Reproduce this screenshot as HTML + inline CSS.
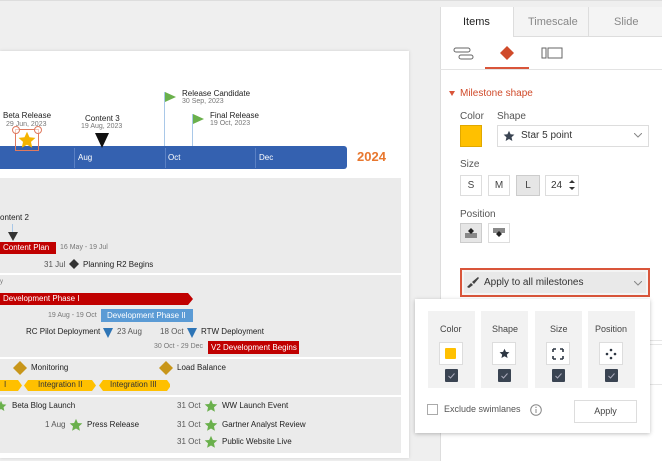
<!DOCTYPE html>
<html><head><style>
*{margin:0;padding:0;box-sizing:border-box}
body{width:662px;height:461px;background:#efefef;font-family:"Liberation Sans",sans-serif;position:relative;overflow:hidden;font-size:8px;color:#222}
.a{position:absolute;white-space:nowrap}
.g{color:#777}
.lane{position:absolute;left:0;width:401px;background:#ebebeb}
</style></head><body>
<div class="a" style="left:0;top:0;width:662px;height:1px;background:#ddd"></div>
<!-- canvas -->
<div class="a" style="left:0;top:51px;width:409px;height:407px;background:#fff;box-shadow:0 0 3px #ccc"></div>
<div class="a" style="left:0;top:146px;width:347px;height:23px;background:#3461b0;border-radius:0 3px 3px 0"></div>
<div class="a" style="left:74px;top:148px;width:1px;height:20px;background:#5a80c4"></div>
<div class="a" style="left:165px;top:148px;width:1px;height:20px;background:#5a80c4"></div>
<div class="a" style="left:255px;top:148px;width:1px;height:20px;background:#5a80c4"></div>
<div class="a" style="left:78px;top:153px;color:#fff;font-size:8px">Aug</div>
<div class="a" style="left:168px;top:153px;color:#fff;font-size:8px">Oct</div>
<div class="a" style="left:259px;top:153px;color:#fff;font-size:8px">Dec</div>
<div class="a" style="left:357px;top:149px;color:#e8772e;font-size:13px;font-weight:bold">2024</div>
<!-- milestones top -->
<div class="a" style="left:3px;top:111px;font-size:8px">Beta Release</div>
<div class="a g" style="left:6px;top:121px;font-size:7px">29 Jun, 2023</div>
<div class="a" style="left:15px;top:129px;width:24px;height:22px;border:1px solid #e07a5f"></div>
<svg class="a" style="left:11px;top:125px" width="32" height="12"><circle cx="5" cy="5" r="3.5" fill="#fff" fill-opacity=".6" stroke="#e07a5f"/><circle cx="27" cy="5" r="3.5" fill="#fff" fill-opacity=".6" stroke="#e07a5f"/></svg>
<svg class="a" style="left:17px;top:131px" width="20" height="18" viewBox="0 0 24 23"><path d="M12 1l3.2 7 7.6.8-5.7 5.1 1.6 7.5L12 17.6 5.3 21.4l1.6-7.5L1.2 8.8 8.8 8z" fill="#f4b400"/></svg>
<div class="a" style="left:85px;top:114px;font-size:8px">Content 3</div>
<div class="a g" style="left:81px;top:123px;font-size:7px">19 Aug, 2023</div>
<svg class="a" style="left:95px;top:133px" width="14" height="16"><path d="M0 0h14L7 15z" fill="#111"/></svg>
<div class="a" style="left:164px;top:92px;width:1px;height:54px;background:#a9c8e8"></div>
<svg class="a" style="left:165px;top:92px" width="12" height="12"><path d="M0 0l11 5L0 10z" fill="#6ab04c"/></svg>
<div class="a" style="left:182px;top:89px;font-size:8px">Release Candidate</div>
<div class="a g" style="left:182px;top:98px;font-size:7px">30 Sep, 2023</div>
<div class="a" style="left:192px;top:114px;width:1px;height:32px;background:#a9c8e8"></div>
<svg class="a" style="left:193px;top:114px" width="12" height="12"><path d="M0 0l11 5L0 10z" fill="#6ab04c"/></svg>
<div class="a" style="left:210px;top:111px;font-size:8px">Final Release</div>
<div class="a g" style="left:210px;top:120px;font-size:7px">19 Oct, 2023</div>
<!-- lanes -->
<div class="lane" style="top:178px;height:95px"></div>
<div class="lane" style="top:275px;height:82px"></div>
<div class="lane" style="top:359px;height:36px"></div>
<div class="lane" style="top:397px;height:56px"></div>
<div class="a" style="left:0;top:213px;font-size:8px">ontent 2</div>
<div class="a" style="left:12px;top:224px;width:1px;height:8px;background:#a9c8e8"></div>
<svg class="a" style="left:8px;top:232px" width="10" height="10"><path d="M0 0h10L5 9z" fill="#333"/></svg>
<div class="a" style="left:0;top:242px;width:56px;height:12px;background:#c00000;color:#fff;font-size:8px;padding:1px 3px">Content Plan</div>
<div class="a g" style="left:60px;top:244px;font-size:7px">16 May - 19 Jul</div>
<div class="a g" style="left:44px;top:260px;font-size:8px;color:#555">31 Jul</div>
<svg class="a" style="left:69px;top:259px" width="10" height="10"><path d="M5 0l5 5-5 5-5-5z" fill="#333"/></svg>
<div class="a" style="left:83px;top:260px;font-size:8px">Planning R2 Begins</div>
<div class="a g" style="left:0;top:279px;font-size:6px">y</div>
<svg class="a" style="left:0;top:293px" width="194" height="12"><path d="M0 0h188l5 6-5 6H0z" fill="#c00000"/></svg>
<div class="a" style="left:3px;top:294px;color:#fff;font-size:8px">Development Phase I</div>
<div class="a g" style="left:48px;top:312px;font-size:7px">19 Aug - 19 Oct</div>
<div class="a" style="left:101px;top:309px;width:92px;height:13px;background:#5b9bd5;color:#fff;font-size:8px;padding:2px 6px">Development Phase II</div>
<div class="a" style="left:26px;top:327px;font-size:8px">RC Pilot Deployment</div>
<svg class="a" style="left:103px;top:328px" width="10" height="10"><path d="M0 0h10L5 10z" fill="#2e75b6"/></svg>
<div class="a g" style="left:117px;top:327px;font-size:8px;color:#555">23 Aug</div>
<div class="a g" style="left:160px;top:327px;font-size:8px;color:#555">18 Oct</div>
<svg class="a" style="left:187px;top:328px" width="10" height="10"><path d="M0 0h10L5 10z" fill="#2e75b6"/></svg>
<div class="a" style="left:201px;top:327px;font-size:8px">RTW Deployment</div>
<div class="a g" style="left:154px;top:343px;font-size:7px">30 Oct - 29 Dec</div>
<div class="a" style="left:208px;top:341px;width:91px;height:13px;background:#c00000;color:#fff;font-size:8px;padding:2px 3px">V2 Development Begins</div>
<svg class="a" style="left:13px;top:361px" width="14" height="14"><path d="M7 0l7 7-7 7-7-7z" fill="#c8961a"/></svg>
<div class="a" style="left:31px;top:363px;font-size:8px">Monitoring</div>
<svg class="a" style="left:159px;top:361px" width="14" height="14"><path d="M7 0l7 7-7 7-7-7z" fill="#c8961a"/></svg>
<div class="a" style="left:177px;top:363px;font-size:8px">Load Balance</div>
<svg class="a" style="left:0;top:380px" width="170" height="11"><path d="M0 0h18l4 5.5-4 5.5H0z" fill="#ffc000"/><path d="M28 0h64l4 5.5-4 5.5H28l-4-5.5z" fill="#ffc000"/><path d="M103 0h64l4 5.5-4 5.5H103l-4-5.5z" fill="#ffc000"/></svg>
<div class="a" style="left:4px;top:380px;font-size:8px;color:#333">I</div>
<div class="a" style="left:38px;top:380px;font-size:8px;color:#333">Integration II</div>
<div class="a" style="left:110px;top:380px;font-size:8px;color:#333">Integration III</div>
<svg class="a" style="left:-5px;top:400px" width="12" height="12" viewBox="0 0 24 23"><path d="M12 1l3.2 7 7.6.8-5.7 5.1 1.6 7.5L12 17.6 5.3 21.4l1.6-7.5L1.2 8.8 8.8 8z" fill="#6ab04c"/></svg>
<div class="a" style="left:12px;top:401px;font-size:8px">Beta Blog Launch</div>
<div class="a" style="left:45px;top:420px;font-size:8px;color:#555">1 Aug</div>
<svg class="a" style="left:69px;top:418px" width="14" height="14" viewBox="0 0 24 23"><path d="M12 1l3.2 7 7.6.8-5.7 5.1 1.6 7.5L12 17.6 5.3 21.4l1.6-7.5L1.2 8.8 8.8 8z" fill="#6ab04c"/></svg>
<div class="a" style="left:87px;top:420px;font-size:8px">Press Release</div>
<div class="a" style="left:177px;top:401px;font-size:8px;color:#555">31 Oct</div>
<svg class="a" style="left:204px;top:399px" width="14" height="14" viewBox="0 0 24 23"><path d="M12 1l3.2 7 7.6.8-5.7 5.1 1.6 7.5L12 17.6 5.3 21.4l1.6-7.5L1.2 8.8 8.8 8z" fill="#6ab04c"/></svg>
<div class="a" style="left:222px;top:401px;font-size:8px">WW Launch Event</div>
<div class="a" style="left:177px;top:420px;font-size:8px;color:#555">31 Oct</div>
<svg class="a" style="left:204px;top:418px" width="14" height="14" viewBox="0 0 24 23"><path d="M12 1l3.2 7 7.6.8-5.7 5.1 1.6 7.5L12 17.6 5.3 21.4l1.6-7.5L1.2 8.8 8.8 8z" fill="#6ab04c"/></svg>
<div class="a" style="left:222px;top:420px;font-size:8px">Gartner Analyst Review</div>
<div class="a" style="left:177px;top:437px;font-size:8px;color:#555">31 Oct</div>
<svg class="a" style="left:204px;top:435px" width="14" height="14" viewBox="0 0 24 23"><path d="M12 1l3.2 7 7.6.8-5.7 5.1 1.6 7.5L12 17.6 5.3 21.4l1.6-7.5L1.2 8.8 8.8 8z" fill="#6ab04c"/></svg>
<div class="a" style="left:222px;top:437px;font-size:8px">Public Website Live</div>

<!-- right panel -->
<div class="a" style="left:440px;top:7px;width:222px;height:454px;background:#fff;border-left:1px solid #ddd"></div>
<div class="a" style="left:513px;top:7px;width:149px;height:30px;background:#f4f4f4;border-bottom:1px solid #ddd"></div>
<div class="a" style="left:513px;top:7px;width:1px;height:30px;background:#ddd"></div>
<div class="a" style="left:588px;top:7px;width:1px;height:30px;background:#ddd"></div>
<div class="a" style="left:463px;top:16px;font-size:11px;color:#222">Items</div>
<div class="a" style="left:528px;top:16px;font-size:11px;color:#888">Timescale</div>
<div class="a" style="left:614px;top:16px;font-size:11px;color:#888">Slide</div>
<div class="a" style="left:440px;top:69px;width:222px;height:1px;background:#e3e3e3"></div>
<div class="a" style="left:485px;top:67px;width:44px;height:2px;background:#d9553a"></div>
<svg class="a" style="left:453px;top:47px" width="22" height="14"><rect x="1" y="1" width="16" height="4" rx="2" fill="none" stroke="#666"/><rect x="6" y="8" width="14" height="4" rx="2" fill="none" stroke="#666"/></svg>
<svg class="a" style="left:500px;top:46px" width="14" height="14"><path d="M7 0l7 7-7 7-7-7z" fill="#d04a2a"/></svg>
<svg class="a" style="left:541px;top:47px" width="22" height="12"><rect x="1" y="1" width="4" height="10" fill="none" stroke="#666"/><rect x="7" y="1" width="14" height="10" fill="none" stroke="#666"/></svg>
<svg class="a" style="left:449px;top:91px" width="6" height="5"><path d="M0 0h6L3 5z" fill="#d9553a"/></svg>
<div class="a" style="left:460px;top:88px;font-size:10px;color:#d04a2a">Milestone shape</div>
<div class="a" style="left:460px;top:111px;font-size:10px;color:#555">Color</div>
<div class="a" style="left:497px;top:111px;font-size:10px;color:#555">Shape</div>
<div class="a" style="left:460px;top:125px;width:22px;height:22px;background:#ffc000;border:1px solid #e0a800"></div>
<div class="a" style="left:497px;top:125px;width:152px;height:22px;border:1px solid #ddd"></div>
<svg class="a" style="left:503px;top:130px" width="12" height="12" viewBox="0 0 24 23"><path d="M12 1l3.2 7 7.6.8-5.7 5.1 1.6 7.5L12 17.6 5.3 21.4l1.6-7.5L1.2 8.8 8.8 8z" fill="#3a4452"/></svg>
<div class="a" style="left:521px;top:130px;font-size:10px;color:#333">Star 5 point</div>
<svg class="a" style="left:634px;top:133px" width="8" height="5"><path d="M0 0l4 4 4-4" fill="none" stroke="#888"/></svg>
<div class="a" style="left:460px;top:159px;font-size:10px;color:#555">Size</div>
<div class="a" style="left:460px;top:175px;width:22px;height:21px;border:1px solid #ddd;font-size:10px;text-align:center;line-height:19px;color:#444">S</div>
<div class="a" style="left:488px;top:175px;width:22px;height:21px;border:1px solid #ddd;font-size:10px;text-align:center;line-height:19px;color:#444">M</div>
<div class="a" style="left:516px;top:175px;width:24px;height:21px;border:1px solid #ccc;background:#e6e6e6;font-size:10px;text-align:center;line-height:19px;color:#444">L</div>
<div class="a" style="left:545px;top:175px;width:34px;height:21px;border:1px solid #ddd;font-size:10px;padding:4px 0 0 5px;color:#333">24</div>
<svg class="a" style="left:569px;top:179px" width="6" height="12"><path d="M0 4l3-3 3 3zM0 8l3 3 3-3z" fill="#333"/></svg>
<div class="a" style="left:460px;top:209px;font-size:10px;color:#555">Position</div>
<div class="a" style="left:460px;top:223px;width:22px;height:20px;border:1px solid #ccc;background:#e6e6e6"></div>
<svg class="a" style="left:464px;top:226px" width="14" height="14"><rect x="1" y="7" width="12" height="5" fill="#888"/><path d="M7 2l3 3-3 3-3-3z" fill="#222"/></svg>
<div class="a" style="left:488px;top:223px;width:22px;height:20px;border:1px solid #ddd"></div>
<svg class="a" style="left:492px;top:226px" width="14" height="14"><rect x="1" y="2" width="12" height="5" fill="#888"/><path d="M7 5l3 3-3 3-3-3z" fill="#222"/></svg>
<div class="a" style="left:441px;top:340px;width:221px;height:1px;background:#e6e6e6"></div>
<div class="a" style="left:441px;top:344px;width:221px;height:1px;background:#e6e6e6"></div>
<div class="a" style="left:441px;top:384px;width:221px;height:1px;background:#e6e6e6"></div>
<!-- apply button -->
<div class="a" style="left:460px;top:268px;width:190px;height:29px;border:2px solid #d9553a;background:#e9e9e9;box-shadow:inset 0 0 0 2px #f4f4f4"></div>
<svg class="a" style="left:466px;top:276px" width="14" height="12"><path d="M1 11l4-4 2 2-4 3zM6 6l6-5 1 1-5 6z" fill="#444"/></svg>
<div class="a" style="left:484px;top:277px;font-size:10px;color:#333">Apply to all milestones</div>
<svg class="a" style="left:634px;top:281px" width="8" height="5"><path d="M0 0l4 4 4-4" fill="none" stroke="#888"/></svg>
<!-- popup -->
<div class="a" style="left:415px;top:299px;width:235px;height:134px;background:#fff;box-shadow:0 1px 4px rgba(0,0,0,.25)"></div>
<div class="a" style="left:428px;top:311px;width:47px;height:77px;background:#f2f2f2"></div>
<div class="a" style="left:481px;top:311px;width:47px;height:77px;background:#f2f2f2"></div>
<div class="a" style="left:535px;top:311px;width:47px;height:77px;background:#f2f2f2"></div>
<div class="a" style="left:588px;top:311px;width:47px;height:77px;background:#f2f2f2"></div>
<div class="a" style="left:440px;top:324px;font-size:9px;color:#444">Color</div>
<div class="a" style="left:492px;top:324px;font-size:9px;color:#444">Shape</div>
<div class="a" style="left:550px;top:324px;font-size:9px;color:#444">Size</div>
<div class="a" style="left:595px;top:324px;font-size:9px;color:#444">Position</div>
<div class="a" style="left:439px;top:342px;width:24px;height:23px;background:#fff;border:1px solid #ddd"></div>
<div class="a" style="left:445px;top:348px;width:11px;height:11px;background:#ffc000;border-radius:1px"></div>
<div class="a" style="left:492px;top:342px;width:24px;height:23px;background:#fff;border:1px solid #ddd"></div>
<svg class="a" style="left:499px;top:348px" width="11" height="11" viewBox="0 0 24 23"><path d="M12 1l3.2 7 7.6.8-5.7 5.1 1.6 7.5L12 17.6 5.3 21.4l1.6-7.5L1.2 8.8 8.8 8z" fill="#2d3642"/></svg>
<div class="a" style="left:546px;top:342px;width:24px;height:23px;background:#fff;border:1px solid #ddd"></div>
<svg class="a" style="left:552px;top:348px" width="12" height="12"><path d="M1 1h3M1 1v3M11 1h-3M11 1v3M1 11h3M1 11v-3M11 11h-3M11 11v-3" stroke="#2d3642" stroke-width="1.6"/></svg>
<div class="a" style="left:599px;top:342px;width:24px;height:23px;background:#fff;border:1px solid #ddd"></div>
<svg class="a" style="left:605px;top:348px" width="12" height="12"><circle cx="6" cy="2" r="1.3" fill="#2d3642"/><circle cx="2" cy="6" r="1.3" fill="#2d3642"/><circle cx="10" cy="6" r="1.3" fill="#2d3642"/><circle cx="6" cy="10" r="1.3" fill="#2d3642"/></svg>
<svg class="a" style="left:445px;top:369px" width="13" height="13"><rect width="13" height="13" rx="1" fill="#3a4452"/><path d="M3.5 7l2 2 4-4.5" fill="none" stroke="#aab" stroke-width="1"/></svg>
<svg class="a" style="left:498px;top:369px" width="13" height="13"><rect width="13" height="13" rx="1" fill="#3a4452"/><path d="M3.5 7l2 2 4-4.5" fill="none" stroke="#aab" stroke-width="1"/></svg>
<svg class="a" style="left:552px;top:369px" width="13" height="13"><rect width="13" height="13" rx="1" fill="#3a4452"/><path d="M3.5 7l2 2 4-4.5" fill="none" stroke="#aab" stroke-width="1"/></svg>
<svg class="a" style="left:605px;top:369px" width="13" height="13"><rect width="13" height="13" rx="1" fill="#3a4452"/><path d="M3.5 7l2 2 4-4.5" fill="none" stroke="#aab" stroke-width="1"/></svg>
<div class="a" style="left:427px;top:404px;width:11px;height:11px;border:1px solid #aaa;background:#fff"></div>
<div class="a" style="left:444px;top:404px;font-size:9px;color:#555">Exclude swimlanes</div>
<svg class="a" style="left:530px;top:404px" width="12" height="12"><circle cx="6" cy="6" r="5.3" fill="none" stroke="#888"/><path d="M6 5v4" stroke="#888"/><circle cx="6" cy="3.3" r=".7" fill="#888"/></svg>
<div class="a" style="left:574px;top:400px;width:63px;height:23px;border:1px solid #ddd;font-size:9px;color:#444;text-align:center;line-height:21px">Apply</div>
</body></html>
